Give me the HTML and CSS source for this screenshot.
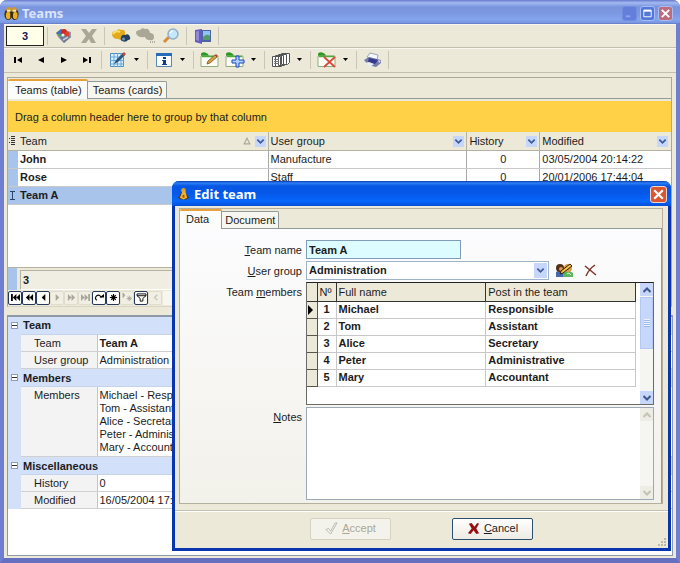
FILE: index.html
```html
<!DOCTYPE html>
<html lang="en">
<head>
<meta charset="utf-8">
<title>Teams</title>
<link rel="stylesheet" href="styles.css">
</head>
<body>
<svg class="defs" aria-hidden="true">
  <symbol id="chev" viewBox="0 0 10 10"><path d="M1.500 3 5 6.500 8.500 3" fill="none" stroke="currentColor" stroke-width="2"/></symbol>
  <symbol id="folder" viewBox="0 0 20 16"><path d="M1 4V1.500Q4-1 8 2l1 2z" fill="#2c9a22"/><path d="M1 4h17v10.500H1z" fill="#fdfdf6" stroke="#8fae7c"/><path d="M2 4.500h15" stroke="#4ea83a" stroke-width="1.500"/></symbol>
  <symbol id="drop" viewBox="0 0 6 4"><path d="M0 0h5L2.500 3z"/></symbol>
</svg>
<main class="window">
  <header class="titlebar">
    <svg class="logo" viewBox="0 0 16 16"><ellipse cx="4.500" cy="9" rx="4" ry="6" fill="#3b3010"/><ellipse cx="11.500" cy="9" rx="4" ry="6" fill="#3b3010"/><ellipse cx="4.500" cy="10" rx="2.500" ry="4" fill="#ecae25"/><ellipse cx="12" cy="10" rx="2.500" ry="4" fill="#ecae25"/><circle cx="5" cy="3.500" r="2.500" fill="#d89424"/><circle cx="11" cy="3.500" r="2.500" fill="#d89424"/><path d="M3 4h4v2H3zM9 4h4v2H9z" fill="#f7e8a0"/><path d="M7 7h2v5H7z" fill="#312914"/></svg>
    <h1>Teams</h1>
    <button class="cap min" aria-label="Minimize"><svg viewBox="0 0 14 14"><path d="M3 10h5" stroke="#8ea5ee" stroke-width="2"/></svg></button>
    <button class="cap" aria-label="Maximize"><svg viewBox="0 0 14 14"><path d="M3 3.500h8v7H3z" fill="none" stroke="#fff"/><path d="M3 4h8" stroke="#fff" stroke-width="2"/></svg></button>
    <button class="cap close" aria-label="Close"><svg viewBox="0 0 14 14"><path d="m3 3 8 8m0-8-8 8" stroke="#fff" stroke-width="2"/></svg></button>
  </header>

  <div class="toolbar">
    <output class="count">3</output>
    <i class="sep"></i>
    <button class="tool" aria-label="Select"><svg viewBox="0 0 18 16"><path d="m1 5 5-4 10 3v5l-7 6-6-6z" fill="#9298aa"/><path d="m4 9 5 6 7-6-5-2z" fill="#747b92"/><path d="m1 5 5-4 3 3-4 4z" fill="#4f6fae"/><circle cx="9" cy="4" r="3" fill="#cf2823"/><circle cx="12" cy="6" r="2.500" fill="#dc3f2d"/><circle cx="8" cy="7" r="1.500" fill="#e7f1ef"/><path d="m8 12 5-3" stroke="#c4c8d6" stroke-width="1.500"/><path d="M3 7h3" stroke="#3faa4a" stroke-width="1.500"/></svg></button>
    <button class="tool" aria-label="Delete" disabled><svg viewBox="0 0 18 16"><path d="M1 1h5l3 4 3-4h5l-5 7 4 7h-5l-2-4-3 4H1l5-7z" fill="#a9a797"/></svg></button>
    <i class="sep"></i>
    <button class="tool" aria-label="Find"><svg class="wide" viewBox="0 0 20 16"><path d="M1 6q0-3 4-3 2-3 5-1 4-1 4 3v4q-3 4-7 2-6 0-6-5" fill="#e3a91c"/><path d="M2 6q3-4 7-2" stroke="#f9df6e" stroke-width="2" fill="none"/><path d="M10 9q1-3 4-2 4-2 5 2 1 3-2 3-2 3-6 1-2-1-1-4" fill="#23405f"/><circle cx="12.500" cy="11" r="1.500" fill="#6f98bc"/></svg></button>
    <button class="tool" aria-label="Find next" disabled><svg class="wide" viewBox="0 0 20 16"><path d="M0 5q0-3 4-3 2-3 5-1 4-1 5 4 4 0 4 4t-5 3q-3 0-4-3-8 1-9-4" fill="#a9a797"/><path d="M14 14h1m1 0h1m1 0h1" stroke="#777"/></svg></button>
    <button class="tool" aria-label="Zoom"><svg viewBox="0 0 18 16"><path d="m7 9-5 5" stroke="#d98b3c" stroke-width="3"/><circle cx="11" cy="6" r="5" fill="#c4e7fa" stroke="#91aecb" stroke-width="1.500"/><path d="M8 5q1-2 3-2" stroke="#fff" stroke-width="1.500" fill="none"/></svg></button>
    <i class="sep"></i>
    <button class="tool" aria-label="Exit"><svg viewBox="0 0 18 16"><path d="M7 2h10v12H7z" fill="#4c63a8"/><path d="M9 3h7v9H9z" fill="#8fc4ee"/><path d="M9 9q4-4 7-1v4H9z" fill="#579968"/><path d="m1 2 7-1v15l-7-2z" fill="#655bbd"/><path d="M2 3.500 5 3v10l-3-1z" fill="#9189da"/></svg></button>
    <i class="sep"></i>
  </div>

  <div class="toolbar second">
    <button class="nav" aria-label="First"><svg viewBox="0 0 10 8"><path d="M1 1h2v6H1zM9 1v6L4 4z"/></svg></button>
    <button class="nav" aria-label="Previous"><svg viewBox="0 0 10 8"><path d="M8 1v6L2 4z"/></svg></button>
    <button class="nav" aria-label="Next"><svg viewBox="0 0 10 8"><path d="M2 1v6l6-3z"/></svg></button>
    <button class="nav" aria-label="Last"><svg viewBox="0 0 10 8"><path d="M1 1v6l5-3zM7 1h2v6H7z"/></svg></button>
    <i class="sep"></i>
    <button class="tool" aria-label="Edit grid"><svg viewBox="0 0 18 16"><path d="M1.500 1.500h13v13h-13z" fill="#dceffc" stroke="#4b8fc4"/><path d="M1 5h14M1 8.500h14M1 12h14M5 1v14M8.500 1v14M12 1v14" stroke="#64a7d8"/><path d="m5 12 2-4 7-7 2 2-7 7z" fill="#2c557b"/><path d="m13 2 2-2 2 2-2 2z" fill="#bf4a35"/></svg></button>
    <button class="more" aria-label="Grid options"><svg><use href="#drop"/></svg></button>
    <i class="sep"></i>
    <button class="tool" aria-label="Information"><svg viewBox="0 0 18 16"><path d="M1.500 1.500h15v13h-15z" fill="#f7fbfe" stroke="#5a87b8"/><path d="M1 1h16v3H1z" fill="#246cba"/><path d="M8 5h3v2H8zM7 8h4v4h1v1H7v-1h1V9H7z" fill="#123d87"/></svg></button>
    <button class="more" aria-label="Information options"><svg><use href="#drop"/></svg></button>
    <i class="sep"></i>
    <button class="tool" aria-label="Edit"><svg class="wide" viewBox="0 0 20 16"><use href="#folder"/><path d="m7 12 1-3 7-6 2 2-7 6z" fill="#d8a23c" stroke="#74532a" stroke-width=".8"/><path d="m15 3 1-1 2 2-1 1z" fill="#ce3d30"/></svg></button>
    <button class="tool" aria-label="Add"><svg class="wide" viewBox="0 0 20 16"><use href="#folder"/><path d="M11 4h3v4h5v3h-5v4h-3v-4H7V8h4z" fill="#a9cdfd" stroke="#1d46bd"/></svg></button>
    <button class="more" aria-label="Add options"><svg><use href="#drop"/></svg></button>
    <i class="sep"></i>
    <button class="tool" aria-label="Copy"><svg class="wide" viewBox="0 0 20 16"><g fill="#fff" stroke="#555"><path d="M10.500 1.500h8v9l-2 2h-6zM7.500 2.500h8v9l-2 2h-6zM4.500 3.500h8v9l-2 2h-6zM1.500 4.500h8v10h-8z"/></g><path d="M3 7.500h5m-5 2h5m-5 2h5" stroke="#777"/></svg></button>
    <button class="more" aria-label="Copy options"><svg><use href="#drop"/></svg></button>
    <i class="sep"></i>
    <button class="tool" aria-label="Remove"><svg class="wide" viewBox="0 0 20 16"><use href="#folder"/><path d="m7 5 11 10m0-10L7 15" stroke="#d9483a" stroke-width="1.800"/></svg></button>
    <button class="more" aria-label="Remove options"><svg><use href="#drop"/></svg></button>
    <i class="sep"></i>
    <button class="tool" aria-label="Print"><svg class="wide" viewBox="0 0 20 16"><path d="m4 5 3-4 8 2-1 5z" fill="#f4f7fb" stroke="#9ca4b8"/><path d="m1 8 5-3 12 3v3l-5 4-8-2z" fill="#767baa"/><path d="m6 6 9 2-3 4-7-2z" fill="#35388c"/><path d="m2 11 4-1 5 2-4 3z" fill="#e8edf5"/><path d="m15 8 3 1-2 2z" fill="#d2d6e9"/></svg></button>
    <i class="sep"></i>
  </div>

  <section class="upper">
    <div class="tabs" role="tablist">
      <button class="tab on" role="tab" aria-selected="true">Teams (table)</button>
      <button class="tab" role="tab" aria-selected="false">Teams (cards)</button>
    </div>
    <div class="group-hint">Drag a column header here to group by that column</div>
    <table class="grid">
      <colgroup><col class="c-ind"><col class="c-team"><col class="c-group"><col class="c-hist"><col></colgroup>
      <thead>
        <tr>
          <th><svg class="lines" viewBox="0 0 7 9"><path d="M2 .5h4M2 2.500h4M2 4.500h4M2 6.500h4M2 8.500h4M0 2.500h1M0 6.500h1" stroke="#333"/></svg></th>
          <th><div class="head"><span>Team</span><svg class="sort" viewBox="0 0 7 7"><path d="M3.500 1 6 6H1z" fill="none" stroke="#aaa799"/></svg><button class="filter" aria-label="Filter team"><svg><use href="#chev"/></svg></button></div></th>
          <th><div class="head"><span>User group</span><button class="filter" aria-label="Filter user group"><svg><use href="#chev"/></svg></button></div></th>
          <th><div class="head"><span>History</span><button class="filter" aria-label="Filter history"><svg><use href="#chev"/></svg></button></div></th>
          <th><div class="head"><span>Modified</span><button class="filter" aria-label="Filter modified"><svg><use href="#chev"/></svg></button></div></th>
        </tr>
      </thead>
      <tbody>
        <tr><td></td><td>John</td><td>Manufacture</td><td>0</td><td>03/05/2004 20:14:22</td></tr>
        <tr><td></td><td>Rose</td><td>Staff</td><td>0</td><td>20/01/2006 17:44:04</td></tr>
        <tr class="sel"><td><svg class="beam" viewBox="0 0 7 9"><path d="M1 .5h5m-5 8h5M3.500 0v9" stroke="#26456e"/></svg></td><td>Team A</td><td></td><td></td><td></td></tr>
      </tbody>
    </table>
    <div class="blank"></div>
    <div class="summary"><span>3</span></div>
    <div class="record-nav">
      <button aria-label="First record"><svg viewBox="0 0 12 10"><path d="M1 1h2v8H1zM7 1v8L3 5zM11 1v8L7 5z"/></svg></button>
      <button aria-label="Previous page"><svg viewBox="0 0 12 10"><path d="M6 1v8L2 5zM10 1v8L6 5z"/></svg></button>
      <button aria-label="Previous record"><svg viewBox="0 0 12 10"><path d="M8 1v8L4 5z"/></svg></button>
      <button disabled aria-label="Next record"><svg viewBox="0 0 12 10"><path d="M4 1v8l4-4z"/></svg></button>
      <button disabled aria-label="Next page"><svg viewBox="0 0 12 10"><path d="M2 1v8l4-4zM6 1v8l4-4z"/></svg></button>
      <button disabled aria-label="Last record"><svg viewBox="0 0 12 10"><path d="M1 1v8l4-4zM5 1v8l4-4zM9 1h2v8H9z"/></svg></button>
      <button aria-label="Refresh"><svg viewBox="0 0 12 10"><path d="M3 8Q0 6 3 3q3-2 5 2" fill="none" stroke="#000" stroke-width="1.300"/><path d="M6 5h5v-4z"/></svg></button>
      <button aria-label="Bookmark"><svg viewBox="0 0 12 10"><path d="M6 1v8M2 5h8M3.500 2.500l5 5m0-5-5 5" stroke="#000" stroke-width="1.300"/></svg></button>
      <button disabled aria-label="Go to bookmark"><svg viewBox="0 0 12 10"><path d="M1 0v5l2-2.500zM8 3v6M5 6h6M6 4l4 4m0-4L6 8" stroke="#aaa799"/></svg></button>
      <button aria-label="Filter"><svg viewBox="0 0 12 10"><path d="M1 1h10v2L7.500 6v3h-3V6L1 3zM1 3h10" fill="none" stroke="#000"/></svg></button>
      <button disabled aria-label="Scroll left"><svg viewBox="0 0 12 10"><path d="M8 2 5 5l3 3" fill="none" stroke="#c9c7ba" stroke-width="1.500"/></svg></button>
      <span class="track"></span>
    </div>
  </section>

  <section class="lower">
    <table class="details">
      <colgroup><col class="d-gutter"><col class="d-label"><col></colgroup>
      <tbody>
        <tr class="cat"><th><button class="fold" aria-label="Collapse Team"></button></th><th colspan="2">Team</th></tr>
        <tr><td></td><th>Team</th><td><b>Team A</b></td></tr>
        <tr><td></td><th>User group</th><td>Administration</td></tr>
        <tr class="cat"><th><button class="fold" aria-label="Collapse Members"></button></th><th colspan="2">Members</th></tr>
        <tr class="multi"><td></td><th>Members</th><td>Michael - Responsible<br>Tom - Assistant<br>Alice - Secretary<br>Peter - Administrative<br>Mary - Accountant</td></tr>
        <tr class="cat"><th><button class="fold" aria-label="Collapse Miscellaneous"></button></th><th colspan="2">Miscellaneous</th></tr>
        <tr><td></td><th>History</th><td>0</td></tr>
        <tr><td></td><th>Modified</th><td>16/05/2004 17:32:10</td></tr>
      </tbody>
    </table>
  </section>
</main>

<div class="dialog" role="dialog" aria-labelledby="dlg-title">
  <header class="dlg-title">
    <svg class="dlg-logo" viewBox="0 0 12 14"><circle cx="6" cy="3" r="2.500" fill="#dca129"/><path d="M4 5h4l4 6-3 2H3l-3-2z" fill="#4d3d12"/><path d="M5 4h3l2 7-4 2-4-2z" fill="#f1b42c"/><path d="M5 8h2v3H5z" fill="#a64b20"/></svg>
    <h2 id="dlg-title">Edit team</h2>
    <button class="cap close" aria-label="Close dialog"><svg viewBox="0 0 14 14"><path d="m3 3 8 8m0-8-8 8" stroke="#fff" stroke-width="2"/></svg></button>
  </header>
  <form class="dlg-body">
    <div class="dlg-tabs-frame">
      <div class="tabs" role="tablist">
        <button type="button" class="tab on" role="tab" aria-selected="true">Data</button>
        <button type="button" class="tab" role="tab" aria-selected="false">Document</button>
      </div>
      <div class="page">
        <label for="tname"><u>T</u>eam name</label>
        <input id="tname" class="tname" type="text" value="Team A">
        <label for="ugroup"><u>U</u>ser group</label>
        <div class="combo-row">
          <div class="combo">
            <select id="ugroup"><option>Administration</option></select>
            <span class="combo-arrow"><svg><use href="#chev"/></svg></span>
          </div>
          <button type="button" class="plain" aria-label="Edit group"><svg viewBox="0 0 19 15"><path d="M1 14V9l4-2 5 3v4z" fill="#4668b2"/><path d="M8 14v-4l5-3 5 3v4z" fill="#5cb45c"/><circle cx="5" cy="5" r="4" fill="#513019"/><circle cx="13" cy="5" r="4" fill="#e09946"/><circle cx="6" cy="6" r="2" fill="#d99555"/><path d="m5 11 1-3 9-7 2 2-9 7z" fill="#f4c142" stroke="#2d2111"/><path d="m12 11 2-1 2 2" stroke="#e3f2cf" fill="none"/></svg></button>
          <button type="button" class="plain" aria-label="Clear group"><svg viewBox="0 0 15 15"><path d="M2 3q5 4 11 9M12 2Q6 6 3 13" fill="none" stroke="#7f3428" stroke-width="1.500"/></svg></button>
        </div>
        <span class="label" id="members-label">Team <u>m</u>embers</span>
        <div class="members-box">
          <div class="members-view">
            <table class="members" aria-labelledby="members-label">
              <colgroup><col class="m-ind"><col class="m-no"><col><col></colgroup>
              <thead><tr><th></th><th>Nº</th><th>Full name</th><th>Post in the team</th></tr></thead>
              <tbody>
                <tr><td><svg class="current" viewBox="0 0 6 10"><path d="M0 0v10l5-5z"/></svg></td><td>1</td><td>Michael</td><td>Responsible</td></tr>
                <tr><td></td><td>2</td><td>Tom</td><td>Assistant</td></tr>
                <tr><td></td><td>3</td><td>Alice</td><td>Secretary</td></tr>
                <tr><td></td><td>4</td><td>Peter</td><td>Administrative</td></tr>
                <tr><td></td><td>5</td><td>Mary</td><td>Accountant</td></tr>
              </tbody>
            </table>
          </div>
          <div class="vbar">
            <span class="vbtn up"><svg><use href="#chev"/></svg></span>
            <span class="thumb"></span>
            <span class="vbtn"><svg><use href="#chev"/></svg></span>
          </div>
        </div>
        <label for="notes"><u>N</u>otes</label>
        <div class="notes">
          <textarea id="notes"></textarea>
          <div class="vbar off">
            <span class="vbtn up"><svg><use href="#chev"/></svg></span>
            <span class="vbtn"><svg><use href="#chev"/></svg></span>
          </div>
        </div>
      </div>
    </div>
    <footer class="actions">
      <button type="button" class="btn" disabled><svg viewBox="0 0 14 14"><path d="m1 8 3-1 2 3 5-9h2L6 13z" fill="#f8f7f1" stroke="#b9b7a8"/></svg><span><u>A</u>ccept</span></button>
      <button type="button" class="btn cancel"><svg viewBox="0 0 14 14"><path d="m2 2 3-1 3 4 3-4 2 1-3 5 3 5-3 1-3-4-3 4-3-1 4-5z" fill="#97100f"/></svg><span><u>C</u>ancel</span></button>
      <svg class="grip" viewBox="0 0 10 10"><path d="M7 1h2v2H7zM4 4h2v2H4zM7 4h2v2H7zM1 7h2v2H1zM4 7h2v2H4zM7 7h2v2H7z" fill="#bdb9a6"/></svg>
    </footer>
  </form>
</div>
</body>
</html>
```
FILE: styles.css
```css
* { box-sizing: border-box; }

body {
  margin: 0;
  font: 11px/13px "Liberation Sans", Arial, sans-serif;
  color: #1c1c1c;
  background: #fff;
}

button, input, select, textarea { font: inherit; color: inherit; }
button { padding: 0; border: 0; background: none; }
svg { display: block; flex: none; }
.defs { position: absolute; width: 0; height: 0; }
table { width: 100%; border-collapse: collapse; table-layout: fixed; }
th, td { padding: 0; font-weight: normal; text-align: left; overflow: hidden; white-space: nowrap; }

/* Main window */
.window {
  display: flex;
  flex-direction: column;
  min-height: 100vh;
  border: solid #6f7dd2;
  border-width: 0 4px 5px;
  border-bottom-color: #6670c0;
  border-radius: 7px 7px 0 0;
  background: #ece9d8;
}

.titlebar {
  display: flex;
  align-items: center;
  gap: 3px;
  height: 24px;
  margin: 0 -4px;
  padding: 3px 7px 0 4px;
  border-radius: 7px 7px 0 0;
  border-bottom: 1px solid #6a82cc;
  background: linear-gradient(#6679cc, #a3b9f2 12%, #7a95dd 30%, #7c98e2 60%, #86a5ef 85%, #7896e0);
}
.titlebar h1, .dlg-title h2 {
  flex: 1;
  margin: 0;
  font: bold 13px/18px "Noto Sans", "Open Sans", sans-serif;
  color: #dbe4fb;
}
.logo { width: 15px; height: 15px; }

.cap {
  width: 15px;
  height: 15px;
  border: 1px solid #a9bcf5;
  border-radius: 3px;
  background: #5478d8;
}
.cap svg { width: 13px; height: 13px; }
.cap.min { border-color: #728ce0; background: #637fdb; }
.cap.close { background: #bd6c7c; }

/* Toolbars */
.toolbar {
  display: flex;
  align-items: center;
  height: 24px;
  padding: 0 2px;
  border-bottom: 1px solid #c2bfae;
  box-shadow: inset 0 1px #f8f7f0;
}
.toolbar.second { height: 25px; }
.count {
  width: 38px;
  height: 20px;
  border: 1px solid #222;
  background: #ffffea;
  font-weight: bold;
  line-height: 19px;
  color: #15155a;
  text-align: center;
}
.sep { width: 1px; height: 18px; margin: 0 3px; background: #c9c6b5; }
.tool, .nav, .more { display: flex; align-items: center; justify-content: center; height: 20px; }
.tool { width: 25px; }
.tool svg { width: 18px; height: 16px; }
.tool .wide { width: 20px; }
.nav { width: 23px; }
.nav svg { width: 10px; height: 8px; }
.more { width: 14px; }
.more svg { width: 6px; height: 4px; }

/* Tabs */
.tabs { display: flex; align-items: flex-end; height: 21px; border-bottom: 1px solid #919b9c; background: #ece9d8; }
.tab {
  height: 17px;
  padding: 1px 4px 0 5px;
  border: 1px solid #919b9c;
  border-left: 0;
  border-bottom: 0;
  border-radius: 0 2px 0 0;
  background: #f7f6ef;
}
.tab.on {
  height: 20px;
  padding: 1px 5px 1px 7px;
  margin-bottom: -1px;
  border-top: 2px solid #e9a13b;
  border-radius: 2px 2px 0 0;
  background: #fcfcfa;
}

/* Teams list */
.upper {
  margin: 4px 4px 0 3px;
  border: 1px solid #aaa899;
  border-bottom-color: #d8d5c5;
}
.group-hint { padding: 10px 7px 8px; margin-top: 2px; background: #ffd146; }
.c-ind { width: 10px; }
.c-team { width: 250px; }
.c-group { width: 30%; }
.c-hist { width: 11%; }
.grid th { height: 18px; background: #ece9d8; border-bottom: 1px solid #b5b2a2; }
.grid th + th + th { border-left: 1px solid #b5b2a2; }
.head { display: flex; align-items: center; gap: 4px; padding: 1px 2px 0; }
.head span { flex: 1; }
.grid th:last-child .head { padding-right: 3px; }
.sort { width: 8px; height: 8px; }
.filter { display: grid; place-items: center; width: 11px; height: 11px; background: #c6d7fb; color: #3c5a9c; }
.filter svg { width: 9px; height: 9px; }
.lines, .beam { width: 7px; height: 9px; margin-left: 1px; }
.grid td { height: 18px; padding: 1px 2px 0; border-bottom: 1px solid #c9c9c9; background: #fff; }
.grid td + td + td { border-left: 1px solid #a8a8a8; }
.grid td:first-child { padding: 0; background: #a9c4ea; }
.grid td:nth-child(2) { font-weight: bold; }
.grid td:nth-child(4) { text-align: center; }
.grid .sel td { background: #a9c4ea; border-left: 0; }
.blank { height: 62px; background: #fff; }
.summary { display: flex; height: 23px; padding-left: 9px; border-top: 1px solid #b5b2a2; background: linear-gradient(90deg, #a9c4ea 9px, #ece9d8 9px); }
.summary span {
  flex: 1;
  margin: 2px 0 0 3px;
  padding: 3px 2px;
  border: 1px solid #b5b2a2;
  border-bottom-color: #fff;
  background: #f0eee2;
  font-weight: bold;
}
.record-nav { display: flex; height: 16px; padding: 1px 0; }
.record-nav button {
  display: grid;
  place-items: center;
  width: 14px;
  height: 14px;
  border: 1px solid #24385c;
  border-radius: 2px;
  background: #fbfbf8;
}
.record-nav button:disabled { border-color: #e0ddcd; background: #f1efe4; fill: #aaa799; }
.record-nav svg { width: 11px; height: 9px; }
.track { flex: 1; margin-left: 1px; background: #f7f6f1; }

/* Details pane */
.lower {
  flex: 1;
  margin: 8px 3px 2px 3px;
  border: 1px solid #8d98a8;
  border-top-width: 2px;
  background: #fff;
}
.d-gutter { width: 13px; }
.d-label { width: 76px; }
.details th, .details td { height: 17px; padding-top: 1px; border-bottom: 1px solid #d0d0d0; }
.details th { padding-left: 13px; background: #f3f3f3; }
.details td { padding-left: 2px; border-left: 1px solid #c4c4c4; }
.details td:first-child { border: 0; background: #d3e0f9; }
.details .cat th { height: 18px; padding: 1px 0 0 2px; border-bottom-color: #c6d3ec; background: #d3e0f9; font-weight: bold; }
.details .cat th:first-child { padding: 0; border-bottom-color: #d3e0f9; }
.details .multi th, .details .multi td { vertical-align: top; padding-top: 2px; height: 70px; }
.fold {
  display: block;
  width: 7px;
  height: 7px;
  margin-left: 3px;
  border: 1px solid #8d9cb8;
  background: linear-gradient(#fff 2px, #333 2px, #333 3px, #fff 3px);
}

/* Edit dialog */
.dialog {
  position: absolute;
  left: 172px;
  top: 181px;
  right: 9px;
  border: 3px solid #0a35b0;
  border-top: 0;
  border-radius: 7px 7px 0 0;
  background: #ece9d8;
}
.dlg-title {
  display: flex;
  align-items: center;
  gap: 5px;
  height: 25px;
  margin: 0 -3px;
  padding: 1px 4px 0 6px;
  border-radius: 7px 7px 0 0;
  background: linear-gradient(#0839a8, #2d80f8 8%, #0656e2 20%, #0558ea 50%, #0666fb 80%, #0550d8);
}
.dlg-title h2 { color: #fff; }
.dlg-title .cap { width: 17px; height: 17px; border-color: #f2d5cb; background: #dc5632; }
.dlg-title .cap svg { width: 15px; height: 15px; }
.dlg-logo { width: 11px; height: 14px; }
.dlg-tabs-frame { margin: 2px 5px 6px 4px; border: 1px solid #b3b09f; }
.dlg-tabs-frame .tabs { height: 20px; }
.dlg-tabs-frame .tab { padding: 1px 3px 0; }
.dlg-tabs-frame .tab.on { padding: 0 12px 1px 6px; }
.page {
  display: grid;
  grid-template-columns: 122px minmax(0, 1fr);
  gap: 2px 4px;
  padding: 11px 7px 3px 0;
  border: solid #919b9c;
  border-width: 0 1px 0 0;
  background: linear-gradient(#fcfcfe, #f2f1ea);
}
.page label, .label { padding-top: 4px; text-align: right; }
.tname {
  width: 155px;
  height: 19px;
  padding: 0 2px;
  border: 1px solid #7f9db9;
  background: #dcfcff;
  font-weight: bold;
}
.combo-row { display: flex; align-items: center; gap: 4px; }
.combo { display: flex; align-items: center; width: 243px; height: 19px; border: 1px solid #9db3ca; background: #fff; }
.combo select { flex: 1; height: 17px; padding: 0 2px; border: 0; appearance: none; background: #fff; font-weight: bold; }
.combo-arrow { display: grid; place-items: center; width: 13px; height: 15px; margin-right: 1px; background: #c6d7fb; color: #405d96; }
.combo-arrow svg { width: 9px; height: 9px; }
.plain { display: grid; place-items: center; width: 22px; }
.plain svg { width: 19px; height: 15px; }

.members-box { display: flex; height: 123px; border: 1px solid #6b6b66; border-top-color: #222; background: #fff; }
.members-view { flex: 1; padding-right: 4px; }
.m-ind { width: 10px; }
.m-no { width: 19px; }
.members th { height: 18px; padding: 1px 0 0 2px; border: 1px solid #33332f; border-top: 0; background: #ece9d8; }
.members th:first-child { border-left: 0; }
.members td { height: 17px; padding-left: 2px; border: 1px solid #c8c8c8; font-weight: bold; }
.members td:first-child { padding: 0 0 0 1px; border: 1px solid #55554c; border-left: 0; background: #ece9d8; }
.members td:nth-child(2) { padding: 0; text-align: center; }
.current { width: 6px; height: 10px; }

.vbar { display: flex; flex-direction: column; width: 13px; background: #f5f5f1; }
.vbtn { display: grid; place-items: center; height: 13px; background: #c6d7fb; color: #3c5690; }
.vbtn:last-child { margin-top: auto; }
.vbtn svg { width: 10px; height: 10px; }
.vbtn.up svg { transform: rotate(180deg); }
.thumb {
  height: 52px;
  margin-top: 1px;
  border: 1px solid #b4c8f6;
  background: repeating-linear-gradient(#eef4fe 0 1px, #9db8ee 1px 2px) center / 6px 8px no-repeat, #c6d7fd;
}
.vbar.off .vbtn { background: #eeede5; color: #c4c2b4; }

.notes { display: flex; height: 93px; border: 1px solid #9aa9b5; background: #fff; }
.notes textarea { flex: 1; padding: 2px; border: 0; outline: 0; resize: none; background: #fff; }

.actions {
  position: relative;
  display: flex;
  justify-content: center;
  align-items: center;
  gap: 61px;
  height: 38px;
  padding-bottom: 2px;
  border-top: 1px solid #c5c1ad;
  box-shadow: inset 0 1px #fff;
}
.btn {
  display: flex;
  align-items: center;
  justify-content: center;
  gap: 4px;
  width: 81px;
  height: 22px;
  border: 1px solid #d5d2c3;
  border-radius: 2px;
  background: #f4f3eb;
}
.btn svg { width: 13px; height: 13px; }
.btn:disabled { color: #aaa898; }
.btn.cancel { border-color: #2c4f6e; background: linear-gradient(#fff, #edebe3); }
.grip { position: absolute; right: 1px; bottom: 1px; width: 10px; height: 10px; }
```
